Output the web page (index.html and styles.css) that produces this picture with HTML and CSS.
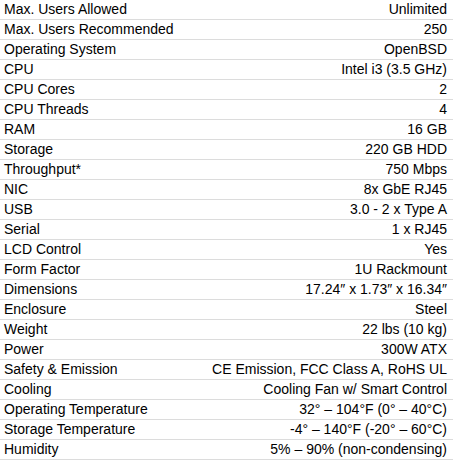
FILE: index.html
```html
<!DOCTYPE html>
<html>
<head>
<meta charset="utf-8">
<link rel="stylesheet" href="styles.css">
</head>
<body>
<table class="specs">
<tr><td>Max. Users Allowed</td><td>Unlimited</td></tr>
<tr><td>Max. Users Recommended</td><td>250</td></tr>
<tr><td>Operating System</td><td>OpenBSD</td></tr>
<tr><td>CPU</td><td>Intel i3 (3.5 GHz)</td></tr>
<tr><td>CPU Cores</td><td>2</td></tr>
<tr><td>CPU Threads</td><td>4</td></tr>
<tr><td>RAM</td><td>16 GB</td></tr>
<tr><td>Storage</td><td>220 GB HDD</td></tr>
<tr><td>Throughput*</td><td>750 Mbps</td></tr>
<tr><td>NIC</td><td>8x GbE RJ45</td></tr>
<tr><td>USB</td><td>3.0 - 2 x Type A</td></tr>
<tr><td>Serial</td><td>1 x RJ45</td></tr>
<tr><td>LCD Control</td><td>Yes</td></tr>
<tr><td>Form Factor</td><td>1U Rackmount</td></tr>
<tr><td>Dimensions</td><td>17.24″ x 1.73″ x 16.34″</td></tr>
<tr><td>Enclosure</td><td>Steel</td></tr>
<tr><td>Weight</td><td>22 lbs (10 kg)</td></tr>
<tr><td>Power</td><td>300W ATX</td></tr>
<tr><td>Safety &amp; Emission</td><td>CE Emission, FCC Class A, RoHS UL</td></tr>
<tr><td>Cooling</td><td>Cooling Fan w/ Smart Control</td></tr>
<tr><td>Operating Temperature</td><td>32° – 104°F (0° – 40°C)</td></tr>
<tr><td>Storage Temperature</td><td>-4° – 140°F (-20° – 60°C)</td></tr>
<tr><td>Humidity</td><td>5% – 90% (non-condensing)</td></tr>
</table>
</body>
</html>
```
FILE: styles.css
```css
html, body {
  margin: 0;
  padding: 0;
  background: #fff;
}
.specs {
  width: 453px;
  border-collapse: collapse;
  font-family: "Liberation Sans", Arial, sans-serif;
  font-size: 14px;
  color: #000;
}
.specs td {
  height: 19px;
  padding: 0 6px 0 4px;
  border-bottom: 1px solid #dcdcdc;
  line-height: 19px;
  white-space: nowrap;
  vertical-align: middle;
}
.specs td:last-child {
  text-align: right;
}
```
